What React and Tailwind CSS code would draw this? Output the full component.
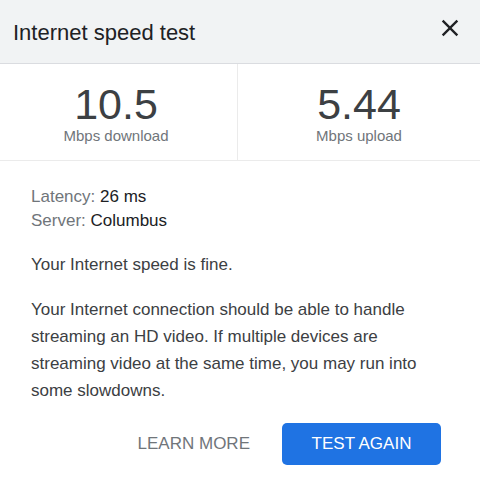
export default function App() {
  return (
    <div className="w-[480px] h-[478px] bg-white font-['Liberation_Sans',Arial,sans-serif] text-[#202124] overflow-hidden">
      {/* header */}
      <div className="flex items-start justify-between h-[64px] bg-[#f1f3f4] border-b border-[#dadce0] pl-[13px] pr-[16px]">
        <h1 className="mt-[22px] text-[22px] leading-[22px] text-[#202124]">Internet speed test</h1>
        <button className="mt-[14px] text-[#202124]" aria-label="Close">
          <svg width="28" height="28" viewBox="0 0 24 24" fill="currentColor">
            <path d="M19 6.41L17.59 5 12 10.59 6.41 5 5 6.41 10.59 12 5 17.59 6.41 19 12 13.41 17.59 19 19 17.59 13.41 12z" />
          </svg>
        </button>
      </div>

      {/* speeds */}
      <div className="flex h-[97px] border-b border-[#ebebeb]">
        <div className="w-[238px] flex flex-col items-center pt-[19px] pr-[5px] border-r border-[#ebebeb]">
          <span className="text-[43px] leading-[42px] text-[#3c4043]">10.5</span>
          <span className="text-[15px] leading-[17px] text-[#70757a] mt-[2px]">Mbps download</span>
        </div>
        <div className="flex-1 flex flex-col items-center pt-[19px]">
          <span className="text-[43px] leading-[42px] text-[#3c4043]">5.44</span>
          <span className="text-[15px] leading-[17px] text-[#70757a] mt-[2px]">Mbps upload</span>
        </div>
      </div>

      {/* details */}
      <div className="px-[31px] pt-[24px] text-[17px]">
        <div className="leading-[24px]">
          <div>
            <span className="text-[#70757a]">Latency: </span>
            <span>26 ms</span>
          </div>
          <div>
            <span className="text-[#70757a]">Server: </span>
            <span>Columbus</span>
          </div>
        </div>
        <p className="leading-[27px] mt-[18px] text-[#3c4043]">Your Internet speed is fine.</p>
        <p className="leading-[27px] mt-[18px] text-[#3c4043]">
          Your Internet connection should be able to handle streaming an HD video. If multiple devices are
          streaming video at the same time, you may run into some slowdowns.
        </p>
      </div>

      {/* actions */}
      <div className="flex items-center justify-end gap-[32px] pr-[39px] mt-[19px]">
        <button className="text-[17px] text-[#70757a]">LEARN MORE</button>
        <button className="w-[159px] h-[42px] rounded-[5px] bg-[#1f73e3] text-white text-[17px]">TEST AGAIN</button>
      </div>
    </div>
  );
}
